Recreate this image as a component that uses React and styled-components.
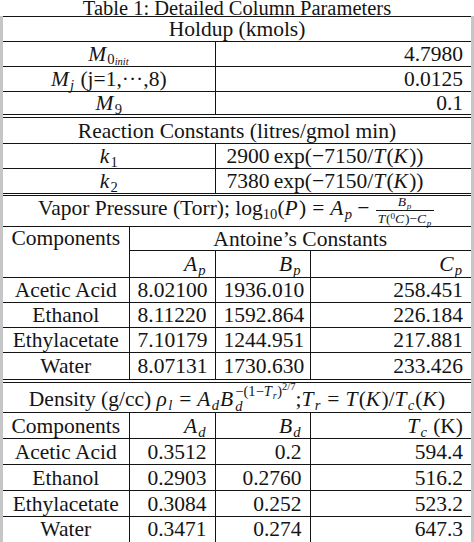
import React from 'react';
import styled, { createGlobalStyle } from 'styled-components';

const GlobalStyle = createGlobalStyle`
  html, body {
    margin: 0;
    padding: 0;
    background: #fff;
  }
  body {
    font-family: "Liberation Serif", "Times New Roman", serif;
    color: #141414;
  }
`;

const Page = styled.div`
  width: 474px;
  overflow: hidden;
`;

const Caption = styled.div`
  height: 16px;
  line-height: 17px;
  font-size: 20.5px;
  text-align: center;
  white-space: nowrap;
`;

const Frame = styled.div`
  border-left: 3px solid #c6c6c6;
  border-right: 3px solid #c6c6c6;
`;

const Table = styled.table`
  width: 100%;
  border-collapse: collapse;
  table-layout: fixed;
  font-size: 21.5px;
  border-top: 1px solid #141414;
`;

const Col = styled.col`
  width: ${(p) => p.$w}px;
`;

const Row = styled.tr`
  height: ${(p) => p.$h || 25}px;
`;

const Cell = styled.td`
  padding: ${(p) => p.$padT ?? 0}px ${(p) => p.$padR ?? 8}px ${(p) => p.$padB ?? 0}px
    ${(p) => p.$padL ?? 8}px;
  text-align: ${(p) => p.$align || 'center'};
  border-bottom: ${(p) => (p.$last ? '2px solid #000' : '1px solid #141414')};
  border-left: ${(p) => (p.$divider ? '1px solid #141414' : 'none')};
  white-space: nowrap;
  line-height: 22px;
  vertical-align: ${(p) => p.$valign || 'middle'};
`;

const Rule = styled.tr`
  height: ${(p) => p.$h || 3}px;
`;

const RuleCell = styled.td`
  padding: 0;
  border-bottom: 1px solid #141414;
`;

/* math italic with a little italic correction */
const I = styled.i`
  font-style: italic;
  margin-right: 0.06em;
`;

const Rel = styled.span`
  margin: 0 0.28em;
`;

const Bin = styled.span`
  margin: 0 0.2em;
`;

const Sub = styled.sub`
  font-size: ${(p) => (p.$small ? '0.72em' : '0.68em')};
  line-height: 0;
  vertical-align: ${(p) => p.$drop || '-0.28em'};
`;

const Sup = styled.sup`
  font-size: 0.68em;
  line-height: 0;
  vertical-align: ${(p) => p.$raise || '0.5em'};
`;

/* superscript stacked over subscript, as TeX sets B_d^{...} */
const Stack = styled.span`
  display: inline-flex;
  flex-direction: column;
  align-items: flex-start;
  vertical-align: 10px;
  font-size: 14.5px;
  line-height: 12px;
  margin-left: 1px;
`;

const StackTop = styled.span`
  margin-bottom: 3px;
`;

const TinySup = styled.sup`
  font-size: 10.5px;
  line-height: 0;
  vertical-align: 6px;
`;

const Frac = styled.span`
  display: inline-flex;
  flex-direction: column;
  vertical-align: 9px;
  font-size: 13.5px;
  line-height: 12px;
  text-align: center;
  margin: 0 2px;
`;

const Num = styled.span`
  border-bottom: 1px solid #141414;
  padding: 0 2px 2px;
`;

const Den = styled.span`
  padding: 2px 2px 0;
`;

const components = [
  { name: 'Acetic Acid', a: '8.02100', b: '1936.010', c: '258.451' },
  { name: 'Ethanol', a: '8.11220', b: '1592.864', c: '226.184' },
  { name: 'Ethylacetate', a: '7.10179', b: '1244.951', c: '217.881' },
  { name: 'Water', a: '8.07131', b: '1730.630', c: '233.426' },
];

const density = [
  { name: 'Acetic Acid', a: '0.3512', b: '0.2', t: '594.4' },
  { name: 'Ethanol', a: '0.2903', b: '0.2760', t: '516.2' },
  { name: 'Ethylacetate', a: '0.3084', b: '0.252', t: '523.2' },
  { name: 'Water', a: '0.3471', b: '0.274', t: '647.3' },
];

const Minus = () => <span>&minus;</span>;

const App = () => (
  <Page>
    <GlobalStyle />
    <Caption>Table 1: Detailed Column Parameters</Caption>
    <Frame>
      <Table>
        <colgroup>
          <Col $w={126} />
          <Col $w={86} />
          <Col $w={95} />
          <Col $w={161} />
        </colgroup>
        <tbody>
          {/* Holdup */}
          <Row $h={25}>
            <Cell colSpan={4}>Holdup (kmols)</Cell>
          </Row>
          <Row>
            <Cell colSpan={2}>
              <I>M</I>
              <Sub $drop="-0.2em">
                0<Sub $small $drop="-0.12em"><I>init</I></Sub>
              </Sub>
            </Cell>
            <Cell colSpan={2} $divider $align="right">4.7980</Cell>
          </Row>
          <Row>
            <Cell colSpan={2}>
              <I>M</I><Sub><I>j</I></Sub> (j=1,&middot;&middot;&middot;,8)
            </Cell>
            <Cell colSpan={2} $divider $align="right">0.0125</Cell>
          </Row>
          <Row $h={23}>
            <Cell colSpan={2}>
              <I>M</I><Sub>9</Sub>
            </Cell>
            <Cell colSpan={2} $divider $align="right">0.1</Cell>
          </Row>
          <Rule><RuleCell colSpan={4} /></Rule>

          {/* Reaction constants */}
          <Row $h={26}>
            <Cell colSpan={4}>Reaction Constants (litres/gmol min)</Cell>
          </Row>
          <Row>
            <Cell colSpan={2}>
              <I>k</I><Sub>1</Sub>
            </Cell>
            <Cell colSpan={2} $divider $align="left" $padL={11}>
              2900&thinsp;exp(<Minus />7150/<I>T</I>(<I>K</I>))
            </Cell>
          </Row>
          <Row>
            <Cell colSpan={2}>
              <I>k</I><Sub>2</Sub>
            </Cell>
            <Cell colSpan={2} $divider $align="left" $padL={11}>
              7380&thinsp;exp(<Minus />7150/<I>T</I>(<I>K</I>))
            </Cell>
          </Row>
          <Rule $h={2}><RuleCell colSpan={4} /></Rule>

          {/* Vapor pressure */}
          <Row $h={31}>
            <Cell colSpan={4} $valign="bottom" $padB={1} $padL={4} $padR={4}>
              Vapor Pressure (Torr); log<Sub>10</Sub>(<I>P</I>)<Rel>=</Rel><I>A</I><Sub><I>p</I></Sub>
              <Bin>&minus;</Bin>
              <Frac>
                <Num><I>B</I><Sub><I>p</I></Sub></Num>
                <Den>
                  <I>T</I>(<Sup $raise="0.4em">0</Sup><I>C</I>)<Minus /><I>C</I><Sub><I>p</I></Sub>
                </Den>
              </Frac>
            </Cell>
          </Row>
          <Row $h={24}>
            <Cell rowSpan={2} $valign="top">Components</Cell>
            <Cell colSpan={3} $divider>Antoine&rsquo;s Constants</Cell>
          </Row>
          <Row $h={27}>
            <Cell $divider $align="right">
              <I>A</I><Sub><I>p</I></Sub>
            </Cell>
            <Cell $divider $align="right">
              <I>B</I><Sub><I>p</I></Sub>
            </Cell>
            <Cell $divider $align="right">
              <I>C</I><Sub><I>p</I></Sub>
            </Cell>
          </Row>
          {components.map((c, i) => (
            <Row key={c.name} $h={i === 3 ? 27 : 25}>
              <Cell>{c.name}</Cell>
              <Cell $divider $align="right">{c.a}</Cell>
              <Cell $divider $align="right">{c.b}</Cell>
              <Cell $divider $align="right">{c.c}</Cell>
            </Row>
          ))}
          <Rule><RuleCell colSpan={4} /></Rule>

          {/* Density */}
          <Row $h={30}>
            <Cell colSpan={4} $valign="bottom" $padL={4} $padR={4}>
              Density (g/cc) <I>&rho;</I><Sub><I>l</I></Sub><Rel>=</Rel><I>A</I><Sub><I>d</I></Sub><I>B</I>
              <Stack>
                <StackTop>
                  <Minus />(1<Minus /><I>T</I><Sub><I>r</I></Sub>)<TinySup>2/7</TinySup>
                </StackTop>
                <I>d</I>
              </Stack>
              ;<I>T</I><Sub><I>r</I></Sub><Rel>=</Rel><I>T</I>(<I>K</I>)/<I>T</I><Sub><I>c</I></Sub>(<I>K</I>)
            </Cell>
          </Row>
          <Row $h={26}>
            <Cell>Components</Cell>
            <Cell $divider $align="right">
              <I>A</I><Sub><I>d</I></Sub>
            </Cell>
            <Cell $divider $align="right">
              <I>B</I><Sub><I>d</I></Sub>
            </Cell>
            <Cell $divider $align="right">
              <I>T</I><Sub><I>c</I></Sub> (K)
            </Cell>
          </Row>
          {density.map((d, i) => (
            <Row key={d.name} $h={26}>
              <Cell $last={i === 3}>{d.name}</Cell>
              <Cell $last={i === 3} $divider $align="right">{d.a}</Cell>
              <Cell $last={i === 3} $divider $align="right">{d.b}</Cell>
              <Cell $last={i === 3} $divider $align="right">{d.t}</Cell>
            </Row>
          ))}
        </tbody>
      </Table>
    </Frame>
  </Page>
);

export default App;
